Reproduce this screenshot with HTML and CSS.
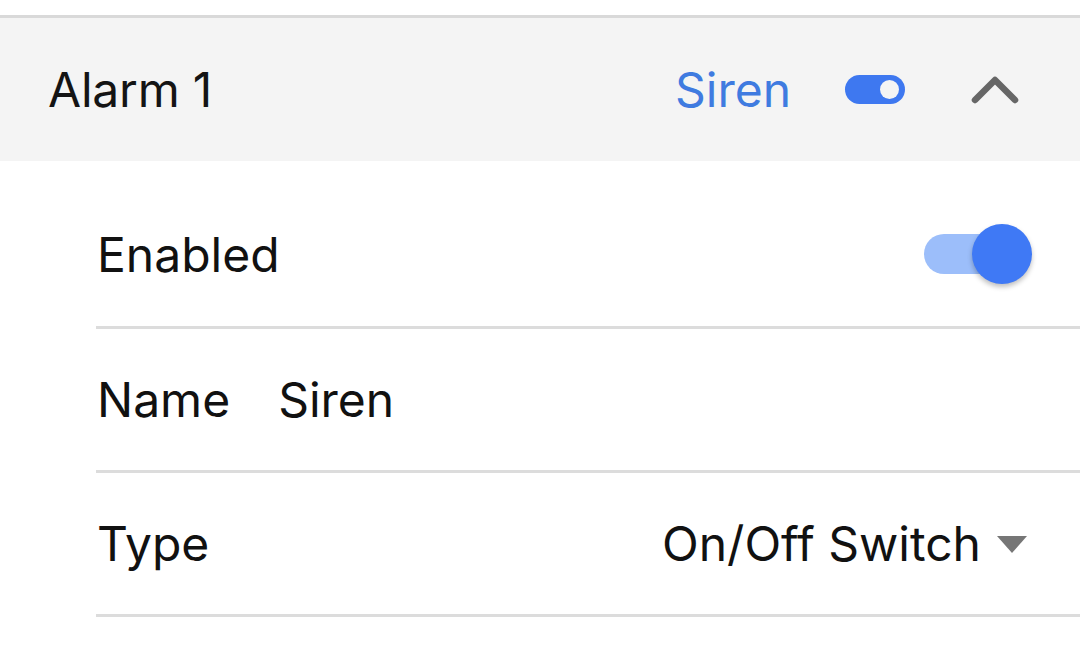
FILE: index.html
```html
<!DOCTYPE html>
<html lang="en">
<head>
<meta charset="utf-8">
<title>Alarm settings</title>
<link rel="stylesheet" href="styles.css">
</head>
<body>
<div class="page">
  <div class="panel-header">
    <div class="title">Alarm 1</div>
    <div class="header-right">
      <span class="header-value">Siren</span>
      <span class="mini-toggle"><span class="mini-knob"></span></span>
      <svg class="chevron" width="48" height="28" viewBox="0 0 48 28">
        <polyline points="4,24 24,4 44,24" fill="none" stroke="#666666" stroke-width="6.5" stroke-linecap="round" stroke-linejoin="round"/>
      </svg>
    </div>
  </div>
  <div class="panel-body">
    <div class="row row-first">
      <span class="label">Enabled</span>
      <span class="switch"><span class="switch-track"></span><span class="switch-thumb"></span></span>
    </div>
    <div class="row">
      <span class="label label-name">Name</span>
      <span class="value">Siren</span>
    </div>
    <div class="row">
      <span class="label">Type</span>
      <span class="select">
        <span class="select-text">On/Off Switch</span>
        <span class="caret"></span>
      </span>
    </div>
  </div>
</div>
</body>
</html>
```

FILE: styles.css
```css
html, body {
  margin: 0;
  padding: 0;
  background: #ffffff;
}
body {
  font-family: Inter, "Noto Sans", "Liberation Sans", sans-serif;
  color: #111111;
  width: 1080px;
  height: 649px;
  overflow: hidden;
}
.page {
  padding-top: 15px;
}
.panel-header {
  border-top: 3px solid #d9d9d9;
  background: #f4f4f4;
  height: 143px;
  display: flex;
  align-items: center;
  justify-content: space-between;
  padding: 0 61px 0 48px;
}
.title {
  font-size: 48px;
  color: #141414;
  letter-spacing: -0.2px;
}
.header-right {
  display: flex;
  align-items: center;
}
.header-value {
  font-size: 48px;
  color: #3f7be0;
  margin-right: 54px;
}
.mini-toggle {
  width: 60px;
  height: 29px;
  border-radius: 15px;
  background: #3e78f0;
  display: flex;
  align-items: center;
  justify-content: flex-end;
  padding-right: 6px;
  box-sizing: border-box;
  margin-right: 66px;
}
.mini-knob {
  width: 19px;
  height: 19px;
  border-radius: 50%;
  background: #f4f4f4;
}
.chevron {
  display: block;
}
.panel-body {
  padding-top: 21px;
  padding-left: 96px;
}
.row {
  height: 141px;
  border-bottom: 3px solid #dcdcdc;
  display: flex;
  align-items: center;
  padding-left: 1px;
  padding-right: 48px;
}
.row-first {
  height: 144px;
  justify-content: space-between;
}
.label {
  font-size: 48px;
  color: #111111;
}
.label-name {
  margin-right: 48px;
}
.value {
  font-size: 48px;
  color: #111111;
}
.switch {
  position: relative;
  width: 108px;
  height: 60px;
}
.switch-track {
  position: absolute;
  left: 0;
  top: 10px;
  width: 86px;
  height: 40px;
  border-radius: 20px;
  background: #9cbefa;
}
.switch-thumb {
  position: absolute;
  right: 0;
  top: 0;
  width: 60px;
  height: 60px;
  border-radius: 50%;
  background: #3f79f5;
  box-shadow: 0 3px 5px rgba(0, 0, 0, 0.25);
}
.select {
  margin-left: auto;
  display: flex;
  align-items: center;
  padding-right: 5px;
}
.select-text {
  font-size: 48px;
  color: #111111;
  margin-right: 16px;
}
.caret {
  width: 0;
  height: 0;
  border-left: 15px solid transparent;
  border-right: 15px solid transparent;
  border-top: 17px solid #767676;
  margin-top: 2px;
}
```
